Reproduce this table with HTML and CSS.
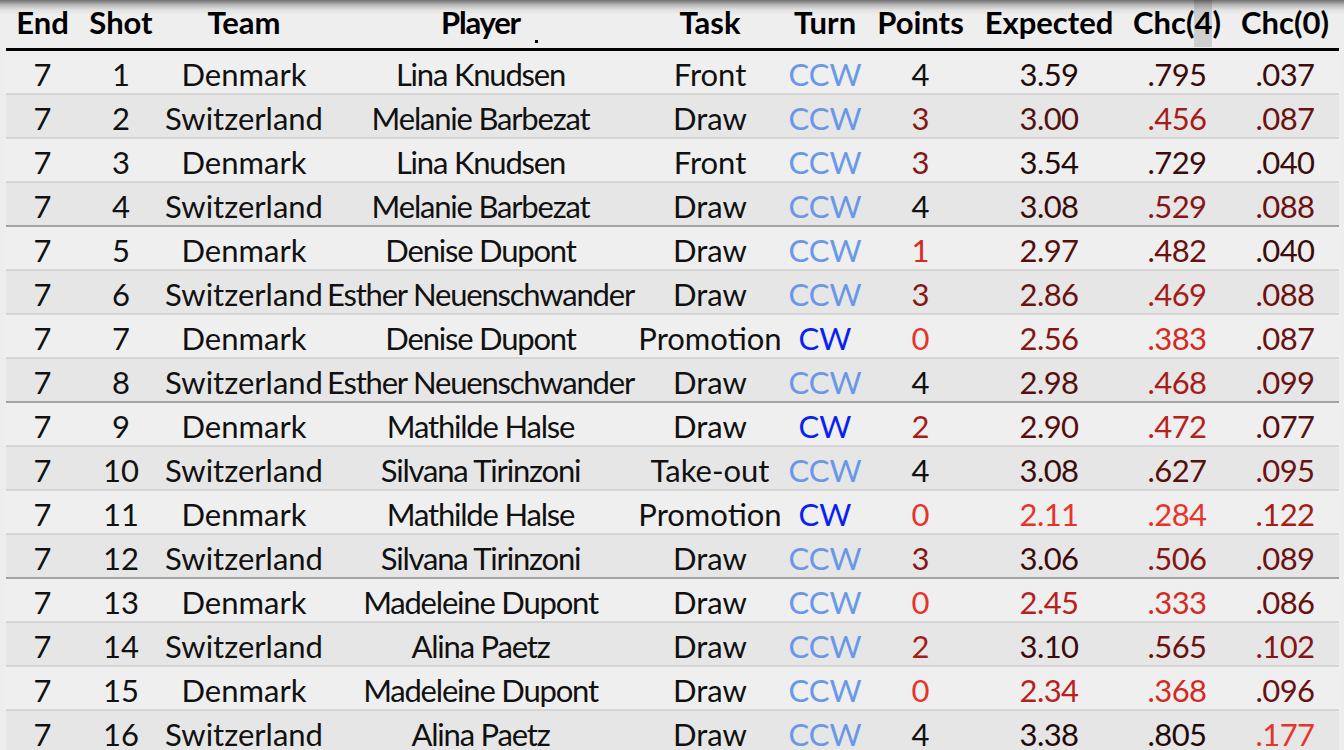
FILE: index.html
```html
<!DOCTYPE html>
<html lang="en">
<head>
<meta charset="utf-8">
<title>Shots</title>
<link rel="stylesheet" href="styles.css">
</head>
<body>
<div class="sheet">
  <div class="row head">
    <div>End</div><div>Shot</div><div>Team</div><div class="pl player-h">Player</div><div>Task</div><div>Turn</div><div>Points</div><div>Expected</div><div>Chc(<span class="sel">4</span>)</div><div>Chc(0)</div>
  </div>

  <div class="row odd"><div>7</div><div>1</div><div>Denmark</div><div class="pl">Lina Knudsen</div><div>Front</div><div class="ccw">CCW</div><div class="k0">4</div><div class="n k1">3.59</div><div class="n k2">.795</div><div class="n k2">.037</div></div>
  <div class="row even"><div>7</div><div>2</div><div>Switzerland</div><div class="pl">Melanie Barbezat</div><div>Draw</div><div class="ccw">CCW</div><div class="k5">3</div><div class="n k3">3.00</div><div class="n k6">.456</div><div class="n k4">.087</div></div>
  <div class="row odd"><div>7</div><div>3</div><div>Denmark</div><div class="pl">Lina Knudsen</div><div>Front</div><div class="ccw">CCW</div><div class="k5">3</div><div class="n k1">3.54</div><div class="n k2">.729</div><div class="n k2">.040</div></div>
  <div class="row even grp"><div>7</div><div>4</div><div>Switzerland</div><div class="pl">Melanie Barbezat</div><div>Draw</div><div class="ccw">CCW</div><div class="k0">4</div><div class="n k2">3.08</div><div class="n k5">.529</div><div class="n k4">.088</div></div>

  <div class="row odd"><div>7</div><div>5</div><div>Denmark</div><div class="pl">Denise Dupont</div><div>Draw</div><div class="ccw">CCW</div><div class="k8">1</div><div class="n k3">2.97</div><div class="n k4">.482</div><div class="n k2">.040</div></div>
  <div class="row even"><div>7</div><div>6</div><div>Switzerland</div><div class="pl">Esther Neuenschwander</div><div>Draw</div><div class="ccw">CCW</div><div class="k5">3</div><div class="n k4">2.86</div><div class="n k6">.469</div><div class="n k4">.088</div></div>
  <div class="row odd"><div>7</div><div>7</div><div>Denmark</div><div class="pl">Denise Dupont</div><div>Promotion</div><div class="cw">CW</div><div class="k9">0</div><div class="n k5">2.56</div><div class="n k8">.383</div><div class="n k4">.087</div></div>
  <div class="row even grp"><div>7</div><div>8</div><div>Switzerland</div><div class="pl">Esther Neuenschwander</div><div>Draw</div><div class="ccw">CCW</div><div class="k0">4</div><div class="n k3">2.98</div><div class="n k6">.468</div><div class="n k4">.099</div></div>

  <div class="row odd"><div>7</div><div>9</div><div>Denmark</div><div class="pl">Mathilde Halse</div><div>Draw</div><div class="cw">CW</div><div class="k6">2</div><div class="n k3">2.90</div><div class="n k7">.472</div><div class="n k3">.077</div></div>
  <div class="row even"><div>7</div><div>10</div><div>Switzerland</div><div class="pl">Silvana Tirinzoni</div><div>Take-out</div><div class="ccw">CCW</div><div class="k0">4</div><div class="n k2">3.08</div><div class="n k3">.627</div><div class="n k4">.095</div></div>
  <div class="row odd"><div>7</div><div>11</div><div>Denmark</div><div class="pl">Mathilde Halse</div><div>Promotion</div><div class="cw">CW</div><div class="k9">0</div><div class="n k9">2.11</div><div class="n k9">.284</div><div class="n k6">.122</div></div>
  <div class="row even grp"><div>7</div><div>12</div><div>Switzerland</div><div class="pl">Silvana Tirinzoni</div><div>Draw</div><div class="ccw">CCW</div><div class="k5">3</div><div class="n k2">3.06</div><div class="n k5">.506</div><div class="n k4">.089</div></div>

  <div class="row odd"><div>7</div><div>13</div><div>Denmark</div><div class="pl">Madeleine Dupont</div><div>Draw</div><div class="ccw">CCW</div><div class="k9">0</div><div class="n k7">2.45</div><div class="n k8">.333</div><div class="n k4">.086</div></div>
  <div class="row even"><div>7</div><div>14</div><div>Switzerland</div><div class="pl">Alina Paetz</div><div>Draw</div><div class="ccw">CCW</div><div class="k6">2</div><div class="n k2">3.10</div><div class="n k4">.565</div><div class="n k5">.102</div></div>
  <div class="row odd"><div>7</div><div>15</div><div>Denmark</div><div class="pl">Madeleine Dupont</div><div>Draw</div><div class="ccw">CCW</div><div class="k9">0</div><div class="n k7">2.34</div><div class="n k8">.368</div><div class="n k4">.096</div></div>
  <div class="row even"><div>7</div><div>16</div><div>Switzerland</div><div class="pl">Alina Paetz</div><div>Draw</div><div class="ccw">CCW</div><div class="k0">4</div><div class="n k1">3.38</div><div class="n k1">.805</div><div class="n k9">.177</div></div>
</div>
</body>
</html>
```

FILE: styles.css
```css
html, body {
  margin: 0;
  padding: 0;
}
body {
  background: linear-gradient(to bottom, #6f6f6f 0px, #b9b9b9 5px, #e2e2e2 10px, #eeeeee 15px) no-repeat, #eeeeee;
  font-family: Lato, "Noto Sans", sans-serif;
  color: #111111;
  height: 750px;
  overflow: hidden;
}
.sheet {
  margin-left: 6px;
  width: 1333px;
}
.row {
  display: grid;
  grid-template-columns: 73px 84px 162px 311px 148px 82px 109px 148px 108px 108px;
  height: 44px;
  box-sizing: border-box;
  border-bottom: 2px solid #d5d5d5;
  font-size: 31px;
  line-height: 44px;
}
.row > div {
  text-align: center;
  white-space: nowrap;
}
.row > .pl {
  letter-spacing: -1.2px;
}
.row > .n {
  letter-spacing: -0.6px;
}
.row.head {
  height: 51px;
  border-bottom: 3px solid #000000;
  font-weight: 700;
  line-height: 44px;
  color: #000000;
}
.row.odd { background: #efefef; }
.row.even { background: #e6e6e6; }
.row.grp { border-bottom-color: #a3a3a3; }
.row.odd, .row.even { line-height: 46px; }

.sel {
  background: rgba(0, 0, 0, 0.13);
  padding: 4px 0 6px;
}
.player-h {
  position: relative;
}
.player-h::after {
  content: "";
  position: absolute;
  left: 210px;
  top: 40px;
  width: 3px;
  height: 3px;
  background: #000000;
}

.ccw { color: #6a98e8; }
.cw { color: #0a22f0; }

.k0 { color: #111111; }
.k1 { color: #220a0a; }
.k2 { color: #3a0c0c; }
.k3 { color: #550f0f; }
.k4 { color: #6a1111; }
.k5 { color: #861616; }
.k6 { color: #a51d18; }
.k7 { color: #b8221c; }
.k8 { color: #d22a21; }
.k9 { color: #e6342a; }
```
